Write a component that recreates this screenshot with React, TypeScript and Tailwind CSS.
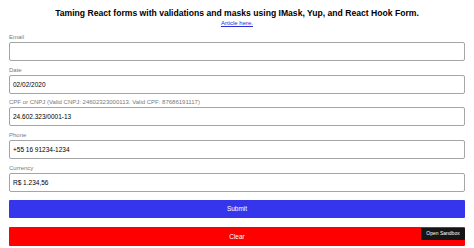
export default function App() {
    const fields = [
        { label: "Email", value: "" },
        { label: "Date", value: "02/02/2020" },
        { label: "CPF or CNPJ (Valid CNPJ: 24602323000113. Valid CPF: 87686191117)", value: "24.602.323/0001-13" },
        { label: "Phone", value: "+55 16 91234-1234" },
        { label: "Currency", value: "R$ 1.234,56" },
    ]

    return (
        <div className="relative w-full min-h-[248px] bg-white px-[9px] font-['Liberation_Sans',Arial,sans-serif]">
            <h1 className="pt-[7px] text-center text-[8.6px] leading-[12px] font-bold text-black">
                Taming React forms with validations and masks using IMask, Yup, and React Hook Form.
            </h1>
            <div className="text-center text-[6px] leading-[8px]">
                <a href="#" className="text-[#2b2bd8] underline">Article here.</a>
            </div>
            <form className="mt-[6px] flex flex-col gap-[4.7px]">
                {fields.map((f) => (
                    <div key={f.label} className="flex flex-col gap-[1px]">
                        <label className="text-[6px] leading-[8px] text-[#7a7a7a]">{f.label}</label>
                        <input
                            defaultValue={f.value}
                            className="h-[19px] w-full rounded-[2px] border border-[#a5a5a5] px-[3px] text-[6.5px] text-black outline-none"
                        />
                    </div>
                ))}
                <button
                    type="button"
                    className="mt-[3.3px] h-[18.3px] w-full rounded-[1px] bg-[#3535ec] text-[6.5px] text-white"
                >
                    Submit
                </button>
                <button
                    type="button"
                    className="mt-[4.7px] h-[18.3px] w-full rounded-[1px] bg-[#ff0000] text-[6.5px] text-white"
                >
                    Clear
                </button>
            </form>
            <div className="absolute left-[421px] top-[228px] flex h-[12px] w-[44px] items-center justify-center rounded-[1px] bg-[#151515] text-[5px] text-white">
                Open Sandbox
            </div>
        </div>
    )
}
